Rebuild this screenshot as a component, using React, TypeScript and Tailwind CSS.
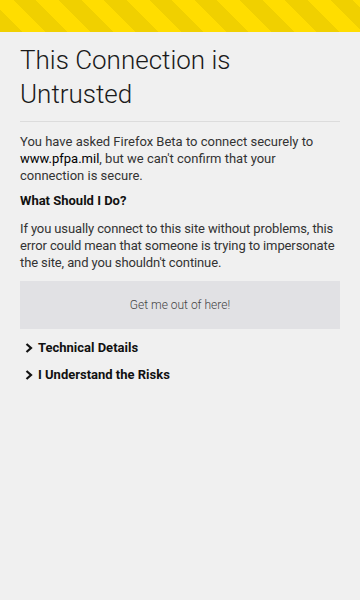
import React from "react"

function Chevron() {
  return (
    <svg width="10" height="12" viewBox="0 0 10 12" className="shrink-0">
      <path d="M2.5 2 L7 6 L2.5 10" fill="none" stroke="#111" strokeWidth="2.2" />
    </svg>
  )
}

export default function App() {
  return (
    <div
      className="min-h-[600px] w-[360px] bg-[#f0f0f0] text-[#222]"
      style={{ fontFamily: "Roboto, 'Noto Sans', sans-serif" }}
    >
      <div className="h-8 w-full bg-[repeating-linear-gradient(45deg,#f0d000_0px,#f0d000_16px,#ffdd00_16px,#ffdd00_32px)]" />
      <div className="px-5 pt-[11px]">
        <h1 className="text-[26px] font-light leading-[34px] text-[#1a1a1a]">
          This Connection is
          <br />
          Untrusted
        </h1>
        <hr className="mt-[10px] border-t border-[#dcdcdc]" />
        <p className="mt-[11px] text-[13px] leading-[17px] text-[#333]">
          You have asked Firefox Beta to connect securely to{" "}
          <span className="text-black">www.pfpa.mil</span>, but we can't confirm that your
          connection is secure.
        </p>
        <h2 className="mt-[8px] text-[13px] font-bold leading-[17px] text-[#111]">What Should I Do?</h2>
        <p className="mt-[11px] text-[13px] leading-[17px] tracking-[-0.12px] text-[#333]">
          If you usually connect to this site without problems, this error could mean that someone is
          trying to impersonate the site, and you shouldn't continue.
        </p>
        <button className="mt-[10px] flex h-12 w-full items-center justify-center bg-[#e1e1e4] text-[12px] font-light text-[#444]">
          Get me out of here!
        </button>
        <div className="mt-[10px] flex items-center gap-[4px] pl-[4px] text-[13px] font-bold leading-[17px] text-[#111]">
          <Chevron />
          <span>Technical Details</span>
        </div>
        <div className="mt-[10px] flex items-center gap-[4px] pl-[4px] text-[13px] font-bold leading-[17px] text-[#111]">
          <Chevron />
          <span>I Understand the Risks</span>
        </div>
      </div>
    </div>
  )
}
